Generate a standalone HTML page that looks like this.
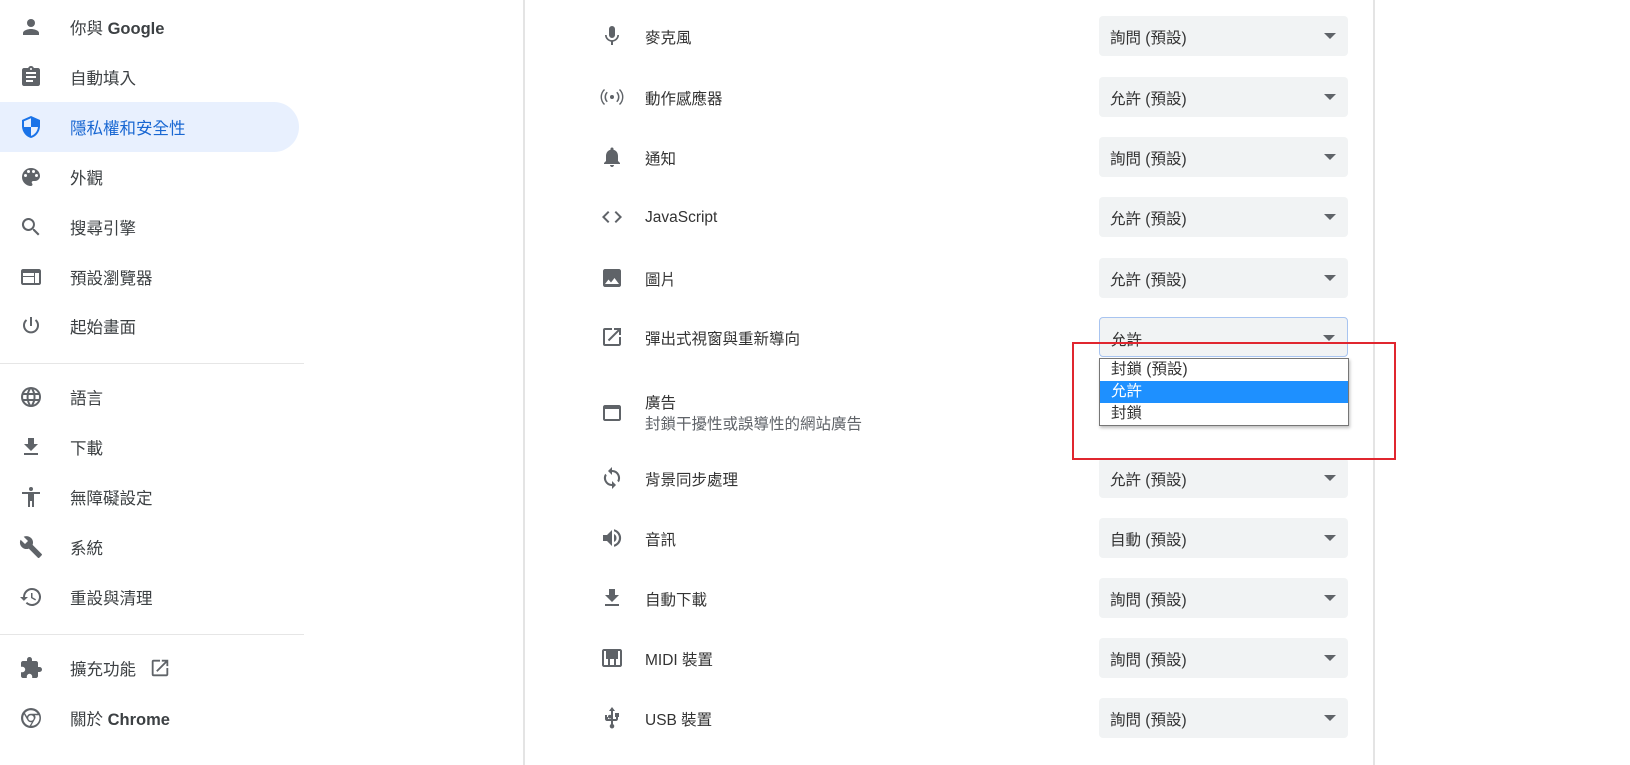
<!DOCTYPE html>
<html><head><meta charset="utf-8"><style>
*{margin:0;padding:0;box-sizing:border-box}
body{width:1630px;height:758px;background:#fff;font-family:"Liberation Sans","Noto Sans CJK TC",sans-serif;color:#333;position:relative;overflow:hidden}
.s{position:absolute;left:0;width:300px;height:50px;display:flex;align-items:center;font-size:16.5px;color:#3c4043}
.s svg{position:absolute;left:19px;width:24px;height:24px;fill:#5f6368}
.s span{position:absolute;left:70px}
.sel{position:absolute;left:0;top:102px;width:299px;height:50px;background:#e8f0fe;border-radius:0 25px 25px 0}
.sep{position:absolute;left:0;width:304px;height:1px;background:#e6e6e6}
.card{position:absolute;left:523px;top:-5px;width:852px;height:770px;border-left:2px solid #e4e4e4;border-right:2px solid #e4e4e4}
.r{position:absolute;left:0;width:1630px;height:40px}
.r svg{position:absolute;left:600px;top:8px;width:24px;height:24px;fill:#5f6368}
.r .t{position:absolute;left:645px;top:10px;font-size:15.5px;color:#333}
.r .b{position:absolute;left:1099px;top:0;width:249px;height:40px;background:#f1f3f4;border-radius:4px;font-size:15.5px;padding:10px 0 0 11px;color:#333}
.r .b:after{content:"";position:absolute;right:12px;top:17px;border-left:6px solid transparent;border-right:6px solid transparent;border-top:6px solid #5f6368}
</style></head><body>
<div class="sel"></div>
<div class="s" style="top:2px"><svg viewBox="0 0 24 24"><circle cx="12" cy="8" r="4"/><path d="M4 20v-2c0-2.7 5.3-4 8-4s8 1.3 8 4v2z"/></svg><span>你與 <b style="font-weight:600">Google</b></span></div>
<div class="s" style="top:52px"><svg viewBox="0 0 24 24"><path d="M19 3h-4.2C14.4 1.8 13.3 1 12 1s-2.4.8-2.8 2H5c-1.1 0-2 .9-2 2v14c0 1.1.9 2 2 2h14c1.1 0 2-.9 2-2V5c0-1.1-.9-2-2-2zm-7 0c.6 0 1 .4 1 1s-.4 1-1 1-1-.4-1-1 .4-1 1-1zm2 14H7v-2h7zm3-4H7v-2h10zm0-4H7V7h10z"/></svg><span>自動填入</span></div>
<div class="s" style="top:102px;color:#1967d2"><svg viewBox="0 0 24 24" style="fill:#1a73e8"><path d="M12 1L3 5v6c0 5.5 3.8 10.7 9 12 5.2-1.3 9-6.5 9-12V5zm0 11h7c-.5 4.1-3.3 7.8-7 8.9zm0 0H5V6.3l7-3.1z"/></svg><span>隱私權和安全性</span></div>
<div class="s" style="top:152px"><svg viewBox="0 0 24 24"><path d="M12 3a9 9 0 000 18c.8 0 1.5-.7 1.5-1.5 0-.4-.1-.7-.4-1-.2-.3-.4-.6-.4-1 0-.8.7-1.5 1.5-1.5H16c2.8 0 5-2.2 5-5 0-4.4-4-8-9-8zM6.5 12a1.5 1.5 0 110-3 1.5 1.5 0 010 3zm3-4a1.5 1.5 0 110-3 1.5 1.5 0 010 3zm5 0a1.5 1.5 0 110-3 1.5 1.5 0 010 3zm3 4a1.5 1.5 0 110-3 1.5 1.5 0 010 3z"/></svg><span>外觀</span></div>
<div class="s" style="top:202px"><svg viewBox="0 0 24 24"><path d="M15.5 14h-.8l-.3-.3A6.5 6.5 0 109.5 16c1.6 0 3.1-.6 4.2-1.6l.3.3v.8l5 5 1.5-1.5zm-6 0a4.5 4.5 0 110-9 4.5 4.5 0 010 9z"/></svg><span>搜尋引擎</span></div>
<div class="s" style="top:252px"><svg viewBox="0 0 24 24"><path d="M20 4H4c-1.1 0-2 .9-2 2v12c0 1.1.9 2 2 2h16c1.1 0 2-.9 2-2V6c0-1.1-.9-2-2-2zm-5 14H4v-6h11zm0-7H4V8h11zm5 7h-4V8h4z"/></svg><span>預設瀏覽器</span></div>
<div class="s" style="top:301px"><svg viewBox="0 0 24 24" style="fill:none;stroke:#5f6368;stroke-width:2"><path d="M12 3v9"/><path d="M16.5 6a7 7 0 11-9 0"/></svg><span>起始畫面</span></div>
<div class="sep" style="top:363px"></div>
<div class="s" style="top:372px"><svg viewBox="0 0 24 24"><path d="M12 2a10 10 0 100 20 10 10 0 000-20zm6.9 6h-2.9c-.3-1.3-.8-2.5-1.4-3.6A8 8 0 0118.9 8zM12 4c.8 1.2 1.5 2.5 1.9 4h-3.8c.4-1.4 1.1-2.8 1.9-4zM4.3 14a8 8 0 010-4h3.4a16 16 0 000 4zm.8 2h3c.3 1.3.8 2.5 1.4 3.6A8 8 0 015.1 16zM8 8H5.1a8 8 0 014.3-3.6C8.8 5.5 8.4 6.7 8 8zm4 12c-.8-1.2-1.5-2.5-1.9-4h3.8c-.4 1.4-1.1 2.8-1.9 4zm2.300-6H9.7a14 14 0 010-4h4.7a14 14 0 010 4zm.3 5.6c.6-1.1 1.1-2.3 1.4-3.6h3a8 8 0 01-4.4 3.6zm1.8-5.6a16 16 0 000-4h3.4a8 8 0 010 4z"/></svg><span>語言</span></div>
<div class="s" style="top:422px"><svg viewBox="0 0 24 24"><path d="M19 9h-4V3H9v6H5l7 7zM5 18v2h14v-2z"/></svg><span>下載</span></div>
<div class="s" style="top:472px"><svg viewBox="0 0 24 24"><path d="M12 2a2 2 0 110 4 2 2 0 010-4zm9 7h-6v13h-2v-6h-2v6H9V9H3V7h18z"/></svg><span>無障礙設定</span></div>
<div class="s" style="top:522px"><svg viewBox="0 0 24 24"><path d="M22.7 19l-9.1-9.1c.9-2.3.4-5-1.5-6.9-2-2-5-2.4-7.4-1.3L9 6 6 9 1.6 4.7C.4 7.1.9 10.1 2.9 12.1c1.9 1.9 4.6 2.4 6.9 1.5l9.1 9.1c.4.4 1 .4 1.4 0l2.3-2.3c.5-.4.5-1.1.1-1.4z"/></svg><span>系統</span></div>
<div class="s" style="top:572px"><svg viewBox="0 0 24 24"><path d="M13 3a9 9 0 00-9 9H1l3.9 3.9L9 12H6a7 7 0 112.1 5l-1.4 1.4A9 9 0 1013 3zm-1 5v5l4.3 2.5.7-1.2-3.5-2.1V8z"/></svg><span>重設與清理</span></div>
<div class="sep" style="top:634px"></div>
<div class="s" style="top:643px"><svg viewBox="0 0 24 24"><path d="M20.5 11H19V7c0-1.1-.9-2-2-2h-4V3.5a2.5 2.5 0 00-5 0V5H4c-1.1 0-2 .9-2 2v3.8h1.5a2.7 2.7 0 010 5.4H2V20c0 1.1.9 2 2 2h3.8v-1.5a2.7 2.7 0 015.4 0V22H17c1.1 0 2-.9 2-2v-4h1.5a2.5 2.5 0 000-5z"/></svg><span>擴充功能 <svg viewBox="0 0 24 24" style="position:static;vertical-align:-4px;margin-left:8px;width:22px;height:22px"><path d="M19 19H5V5h7V3H5a2 2 0 00-2 2v14a2 2 0 002 2h14c1.1 0 2-.9 2-2v-7h-2zM14 3v2h3.6l-9.8 9.8 1.4 1.4L19 6.4V10h2V3z"/></svg></span></div>
<div class="s" style="top:693px"><svg viewBox="0 0 24 24"><path d="M12 2a10 10 0 100 20 10 10 0 000-20zm0 2.2a7.8 7.8 0 016.6 3.6H12a4.3 4.3 0 00-4 2.7L5.9 7a7.8 7.8 0 016.1-2.8zM12 9.2a2.8 2.8 0 110 5.6 2.8 2.8 0 010-5.6zM4.2 12c0-1.3.3-2.5.9-3.6l3.4 5.8a4.3 4.3 0 004.3 2l-2.1 3.6A7.8 7.8 0 014.2 12zm8 7.8l3.3-5.8a4.3 4.3 0 00.4-4.8h4A7.8 7.8 0 0112.2 19.8z"/></svg><span>關於 <b style="font-weight:600">Chrome</b></span></div>

<div class="card"></div>

<div class="r" style="top:16px"><svg viewBox="0 0 24 24"><path d="M12 14a3 3 0 003-3V5a3 3 0 00-6 0v6a3 3 0 003 3zm5.3-3c0 3-2.5 5.1-5.3 5.1S6.7 14 6.7 11H5c0 3.4 2.7 6.2 6 6.7V21h2v-3.3c3.3-.5 6-3.3 6-6.7z"/></svg><div class="t">麥克風</div><div class="b">詢問 (預設)</div></div>
<div class="r" style="top:77px"><svg viewBox="0 0 24 24"><circle cx="12" cy="12" r="2"/><path d="M7.8 7.8l-1.1-1.1a7.5 7.5 0 000 10.6l1.1-1.1a6 6 0 010-8.4zm8.4 0a6 6 0 010 8.4l1.1 1.1a7.5 7.5 0 000-10.6zM5 5L4 4a11 11 0 000 16l1-1a9.6 9.6 0 010-14zm14 0a9.6 9.6 0 010 14l1 1a11 11 0 000-16z"/></svg><div class="t">動作感應器</div><div class="b">允許 (預設)</div></div>
<div class="r" style="top:137px"><svg viewBox="0 0 24 24"><path d="M12 22c1.1 0 2-.9 2-2h-4c0 1.1.9 2 2 2zm6-6v-5c0-3.1-1.6-5.6-4.5-6.3V4a1.5 1.5 0 00-3 0v.7C7.6 5.4 6 7.9 6 11v5l-2 2v1h16v-1z"/></svg><div class="t">通知</div><div class="b">詢問 (預設)</div></div>
<div class="r" style="top:197px"><svg viewBox="0 0 24 24"><path d="M9.4 16.6L4.8 12l4.6-4.6L8 6l-6 6 6 6zm5.2 0l4.6-4.6-4.6-4.6L16 6l6 6-6 6z"/></svg><div class="t" style="top:12px">JavaScript</div><div class="b">允許 (預設)</div></div>
<div class="r" style="top:258px"><svg viewBox="0 0 24 24"><path d="M21 19V5c0-1.1-.9-2-2-2H5c-1.1 0-2 .9-2 2v14c0 1.1.9 2 2 2h14c1.1 0 2-.9 2-2zM8.5 13.5l2.5 3 3.5-4.5 4.5 6H5z"/></svg><div class="t">圖片</div><div class="b">允許 (預設)</div></div>
<div class="r" style="top:317px"><svg viewBox="0 0 24 24"><path d="M19 19H5V5h7V3H5a2 2 0 00-2 2v14a2 2 0 002 2h14c1.1 0 2-.9 2-2v-7h-2zM14 3v2h3.6l-9.8 9.8 1.4 1.4L19 6.4V10h2V3z"/></svg><div class="t">彈出式視窗與重新導向</div><div class="b" style="background:#f1f3f4;border:1.5px solid #a8c4f0">允許</div></div>
<div class="r" style="top:393px"><svg viewBox="0 0 24 24"><path d="M19 4H5c-1.1 0-2 .9-2 2v12c0 1.1.9 2 2 2h14c1.1 0 2-.9 2-2V6c0-1.1-.9-2-2-2zm0 14H5V8h14z"/></svg><div class="t" style="top:-2px">廣告</div><div class="t" style="top:19px;color:#5f6368">封鎖干擾性或誤導性的網站廣告</div></div>
<div class="r" style="top:458px"><svg viewBox="0 0 24 24"><path d="M12 4V1L8 5l4 4V6c3.3 0 6 2.7 6 6 0 1-.3 2-.7 2.8l1.5 1.5A8 8 0 0012 4zm0 14c-3.3 0-6-2.7-6-6 0-1 .3-2 .7-2.8L5.2 7.7A8 8 0 0012 20v3l4-4-4-4z"/></svg><div class="t">背景同步處理</div><div class="b">允許 (預設)</div></div>
<div class="r" style="top:518px"><svg viewBox="0 0 24 24"><path d="M3 9v6h4l5 5V4L7 9zm13.5 3A4.5 4.5 0 0014 8v8a4.5 4.5 0 002.5-4zM14 3.2v2.1a7 7 0 010 13.4v2.1a9 9 0 000-17.6z"/></svg><div class="t">音訊</div><div class="b">自動 (預設)</div></div>
<div class="r" style="top:578px"><svg viewBox="0 0 24 24"><path d="M19 9h-4V3H9v6H5l7 7zM5 18v2h14v-2z"/></svg><div class="t">自動下載</div><div class="b">詢問 (預設)</div></div>
<div class="r" style="top:638px"><svg viewBox="0 0 24 24"><path d="M20 3H4c-1.1 0-2 .9-2 2v14c0 1.1.9 2 2 2h16c1.1 0 2-.9 2-2V5c0-1.1-.9-2-2-2zM8 19H4V5h2v8h2zm6 0h-4v-6h2V5h0v8h2zm6 0h-4v-6h2V5h2z"/></svg><div class="t">MIDI 裝置</div><div class="b">詢問 (預設)</div></div>
<div class="r" style="top:698px"><svg viewBox="0 0 24 24"><path d="M15 7v4h1v2h-3V5h2l-3-4-3 4h2v8H8v-2.1A1.9 1.9 0 109 9a1.9 1.9 0 00-1 .9V11H7V9H5v4c0 1.1.9 2 2 2h4v3.1a2.3 2.3 0 102 0V15h3c1.1 0 2-.9 2-2v-2h1V7z"/></svg><div class="t">USB 裝置</div><div class="b">詢問 (預設)</div></div>

<div style="position:absolute;left:1099px;top:358px;width:250px;height:68px;background:#fff;border:1px solid #767676;box-shadow:1px 2px 3px rgba(0,0,0,.25);font-size:15.5px;line-height:22px">
<div style="padding-left:11px">封鎖 (預設)</div>
<div style="padding-left:11px;background:#1e90ff;color:#fff">允許</div>
<div style="padding-left:11px">封鎖</div>
</div>
<div style="position:absolute;left:1072px;top:342px;width:324px;height:118px;border:2px solid #e0262f"></div>
</body></html>
